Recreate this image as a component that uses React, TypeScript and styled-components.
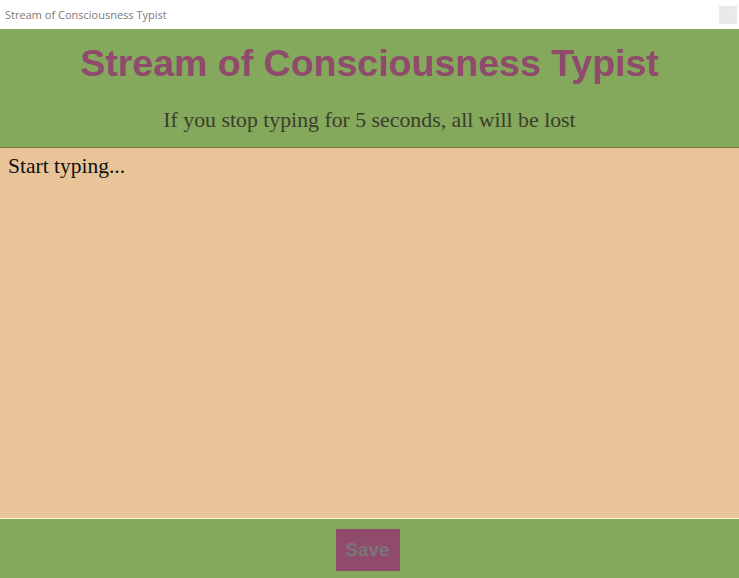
import React from "react";
import styled, { createGlobalStyle } from "styled-components";

const Global = createGlobalStyle`
  html, body { margin: 0; padding: 0; height: 100%; background: #ffffff; }
  #root { height: 100%; }
  * { box-sizing: border-box; }
`;

const Window = styled.div`
  display: flex;
  flex-direction: column;
  width: 739px;
  height: 578px;
  overflow: hidden;
`;

const TitleBar = styled.div`
  height: 29px;
  flex: none;
  display: flex;
  align-items: center;
  justify-content: space-between;
  padding: 0 2px 0 5px;
  background: #ffffff;
  font-family: "Open Sans", "Noto Sans", sans-serif;
  font-size: 11px;
  color: #7a7a7a;
`;

const CloseButton = styled.div`
  width: 18px;
  height: 18px;
  background: #e9e9e9;
  color: #f5f5f5;
  font-size: 9px;
  display: flex;
  align-items: center;
  justify-content: center;
`;

const Header = styled.header`
  flex: none;
  background: #84a85c;
  border-bottom: 1px solid #7d7348;
  height: 119px;
  display: flex;
  flex-direction: column;
  align-items: center;
  padding-top: 13px;
`;

const Title = styled.h1`
  margin: 0;
  font-family: "Liberation Sans", Arial, sans-serif;
  font-weight: bold;
  font-size: 37.5px;
  line-height: 42px;
  color: #8f4a6c;
`;

const Subtitle = styled.p`
  margin: 23px 0 0;
  font-family: "Liberation Serif", Georgia, serif;
  font-size: 21.8px;
  line-height: 26px;
  color: #3d3d2b;
`;

const Editor = styled.textarea`
  flex: 1;
  display: block;
  width: 100%;
  margin: 0;
  border: none;
  border-bottom: 1px solid #fff3d4;
  outline: none;
  resize: none;
  background: #e9c499;
  padding: 6px 8px;
  font-family: "Liberation Serif", Georgia, serif;
  font-size: 21.5px;
  line-height: 24px;
  color: #111;
  &::placeholder { color: #111; opacity: 1; }
`;

const Footer = styled.footer`
  flex: none;
  height: 59px;
  background: #84a85c;
  display: flex;
  justify-content: center;
  padding: 10px 4px 0 0;
`;

const SaveButton = styled.button`
  width: 64px;
  height: 42px;
  border: none;
  background: #8f4a6c;
  color: #777777;
  font-family: "Liberation Sans", Arial, sans-serif;
  font-weight: bold;
  font-size: 19px;
  padding: 0;
  cursor: pointer;
`;

export default function App() {
  return (
    <>
      <Global />
      <Window>
        <TitleBar>
          <span>Stream of Consciousness Typist</span>
          <CloseButton>x</CloseButton>
        </TitleBar>
        <Header>
          <Title>Stream of Consciousness Typist</Title>
          <Subtitle>If you stop typing for 5 seconds, all will be lost</Subtitle>
        </Header>
        <Editor placeholder="Start typing..." />
        <Footer>
          <SaveButton>Save</SaveButton>
        </Footer>
      </Window>
    </>
  );
}
